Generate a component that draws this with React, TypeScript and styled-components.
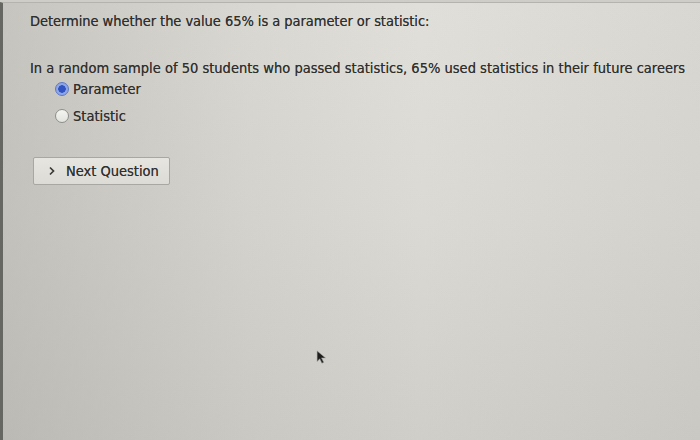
import React, { useState } from "react";
import styled, { createGlobalStyle } from "styled-components";

const GlobalStyle = createGlobalStyle`
	html, body {
		margin: 0;
		padding: 0;
		background: #cfcdc7;
	}
`;

const options = ["Parameter", "Statistic"];

const App = () => {
	const [selected, setSelected] = useState<string>("Parameter");

	return (
		<>
			<GlobalStyle />
			<Screen>
				<Content>
					<Title>Determine whether the value 65% is a parameter or statistic:</Title>
					<Prompt>
						In a random sample of 50 students who passed statistics, 65% used
						statistics in their future careers
					</Prompt>
					<Options>
						{options.map((option) => (
							<Option key={option} onClick={() => setSelected(option)}>
								<Radio checked={selected === option} />
								{option}
							</Option>
						))}
					</Options>
					<NextButton>
						<Chevron viewBox="0 0 8 10">
							<path d="M2 1.5 L5.5 5 L2 8.5" />
						</Chevron>
						Next Question
					</NextButton>
				</Content>
				<Cursor viewBox="0 0 12 16">
					<path d="M1 1 L1 13 L4 10 L6.5 15 L8.5 14 L6 9 L10.5 9 Z" />
				</Cursor>
			</Screen>
		</>
	);
};

export default App;

const Screen = styled.div`
	position: relative;
	box-sizing: border-box;
	width: 700px;
	height: 440px;
	overflow: hidden;
	border-left: 3px solid #666662;
	border-top: 1px solid #b4b3ae;
	border-bottom: 1px solid #b5b4ae;
	margin-top: 2px;
	background:
		linear-gradient(90deg, rgba(150, 148, 142, 0.35) 0%, rgba(150, 148, 142, 0.1) 35%, rgba(255, 255, 255, 0) 60%, rgba(150, 148, 142, 0.1) 100%),
		linear-gradient(180deg, #e0dfd9 0%, #dbd9d3 50%, #cfcec8 100%);
	font-family: "DejaVu Sans Condensed", "DejaVu Sans", sans-serif;
	color: #2f2f2d;
	text-shadow: 0 0 0.5px rgba(40, 40, 38, 0.7);
`;

const Content = styled.div`
	display: flex;
	flex-direction: column;
	align-items: flex-start;
	padding: 8px 0 0 27px;
`;

const Title = styled.div`
	font-size: 14.5px;
	line-height: 20px;
	letter-spacing: -0.05px;
`;

const Prompt = styled.div`
	font-size: 14.5px;
	line-height: 20px;
	margin-top: 27px;
	letter-spacing: 0.01px;
	white-space: nowrap;
`;

const Options = styled.div`
	display: flex;
	flex-direction: column;
	gap: 7px;
	margin: 1px 0 0 25px;
`;

const Option = styled.label`
	display: flex;
	align-items: center;
	gap: 4px;
	font-size: 14.5px;
	line-height: 20px;
	cursor: pointer;
`;

const Radio = styled.span<{ checked: boolean }>`
	box-sizing: border-box;
	width: 14px;
	height: 14px;
	border-radius: 50%;
	border: 1px solid ${({ checked }) => (checked ? "#5b78c8" : "#8e8e8b")};
	background: ${({ checked }) =>
		checked
			? "radial-gradient(circle, #3153c2 0 3.5px, #8fa6e6 4px 100%)"
			: "linear-gradient(180deg, #f4f4f1, #e2e2de)"};
`;

const NextButton = styled.button`
	display: flex;
	align-items: center;
	gap: 10px;
	box-sizing: border-box;
	width: 137px;
	height: 28px;
	margin: 31px 0 0 3px;
	padding: 0 0 0 14px;
	border: 1px solid #a7a7a3;
	border-radius: 2px;
	background: linear-gradient(180deg, #e6e5e0, #dcdbd6);
	font-family: inherit;
	font-size: 14.5px;
	color: #2f2f2d;
	text-shadow: 0 0 0.5px rgba(40, 40, 38, 0.7);
	cursor: pointer;
`;

const Chevron = styled.svg`
	width: 8px;
	height: 10px;
	fill: none;
	stroke: #3a3a38;
	stroke-width: 1.7;
`;

const Cursor = styled.svg`
	position: absolute;
	left: 313px;
	top: 347px;
	width: 11px;
	height: 14px;
	fill: #1e1e1e;
	stroke: #9a9a96;
	stroke-width: 0.6;
`;
